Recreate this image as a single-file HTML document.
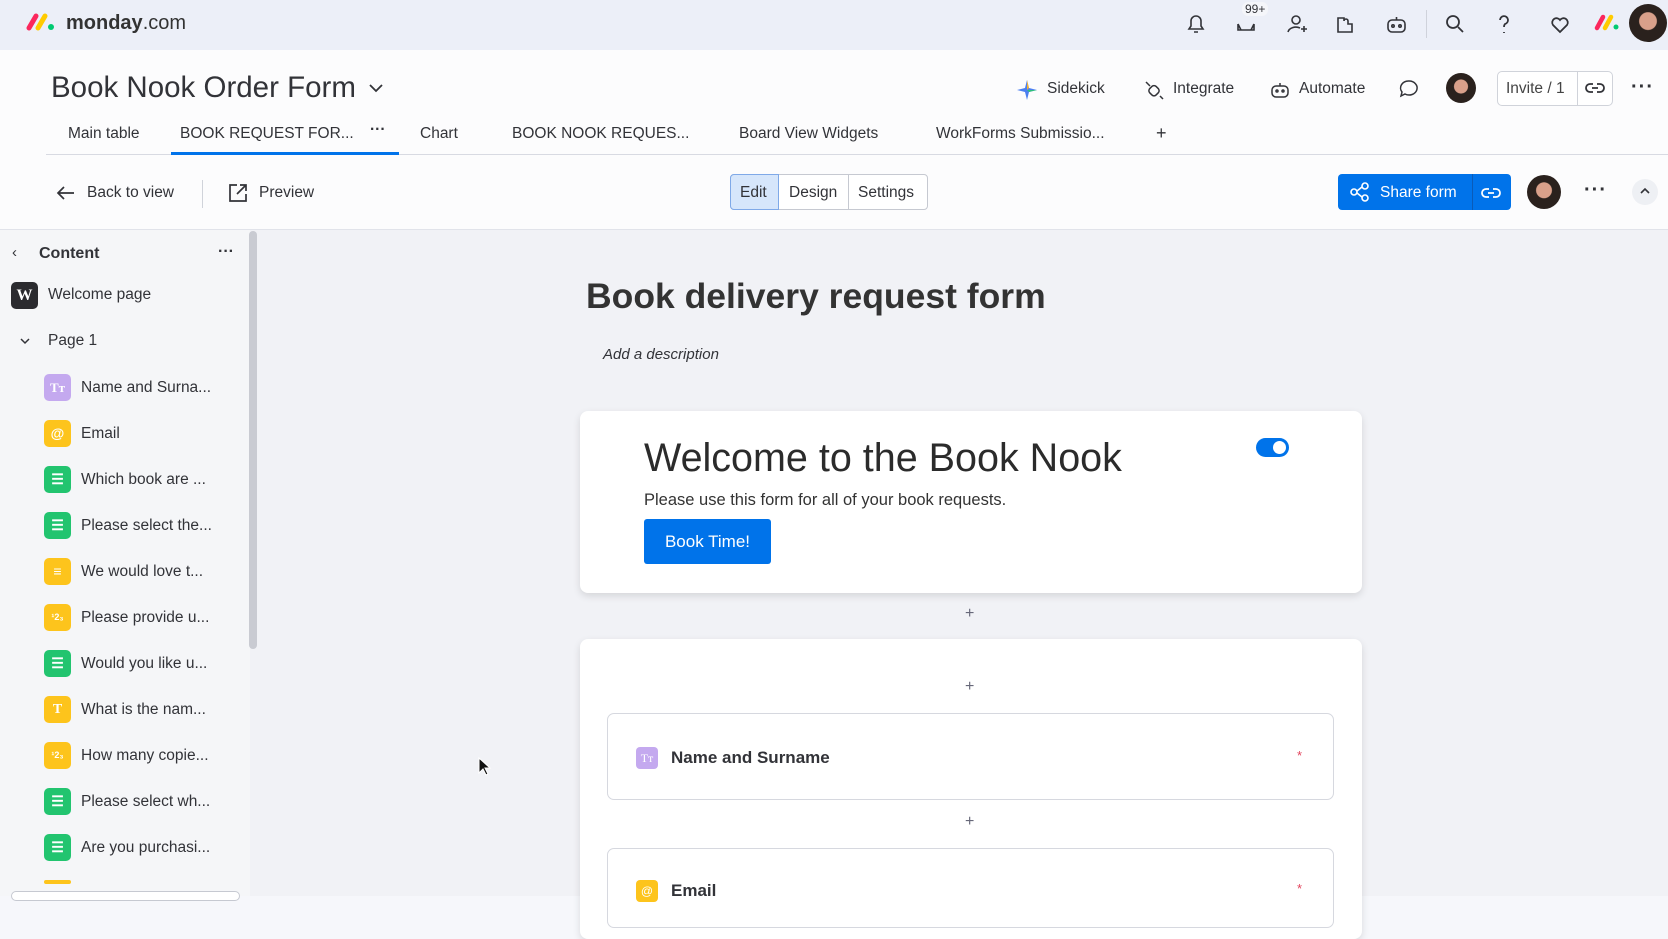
<!DOCTYPE html>
<html><head><meta charset="utf-8"><style>
*{box-sizing:border-box;margin:0;padding:0}
body{width:1668px;height:896px;overflow:hidden;background:#f6f7fb;font-family:"Liberation Sans",sans-serif;color:#323338;position:relative}
.a{position:absolute;white-space:nowrap}
.top{position:absolute;left:0;top:0;width:1668px;height:50px;background:#eceff8}
.hdr{position:absolute;left:0;top:50px;width:1668px;height:180px;background:#fcfcfd;border-bottom:1px solid #e1e3ea}
.main{position:absolute;left:0;top:230px;width:1668px;height:666px;background:#f1f2f6}
.ic{position:absolute;width:27px;height:27px;border-radius:5px;color:#fff;font-size:14px;font-weight:bold;text-align:center;line-height:27px}
.g{background:#22c46f}.y{background:#fdc41c}.p{background:#c4a9ef}
.si{font-size:15.5px;color:#323338}
.card{position:absolute;background:#fff;border-radius:8px;box-shadow:0 3px 8px rgba(0,0,0,.12)}
.fld{position:absolute;background:#fff;border:1px solid #d6d8df;border-radius:7px}
.plus{position:absolute;font-size:16px;color:#676879}
svg{position:absolute}
</style></head><body>
<div class="top"></div>
<svg style="left:26px;top:13px" width="30" height="18" viewBox="0 0 30 18"><line x1="3" y1="15" x2="10" y2="3" stroke="#fb275d" stroke-width="5" stroke-linecap="round"/><line x1="12" y1="15" x2="19" y2="3" stroke="#ffcb00" stroke-width="5" stroke-linecap="round"/><circle cx="25" cy="14" r="3" fill="#00ca72"/></svg>
<div class="a" style="left:66px;top:12px;font-size:20px;color:#333"><b>monday</b>.com</div>
<svg style="left:1185px;top:12px" width="230" height="24" fill="none" stroke="#323338" stroke-width="1.6">
<path d="M4 17h14l-2-3v-5a5 5 0 0 0-10 0v5zM9 20h4"/>
<path d="M53 12l3 6h10l3-6M53 12v6h16v-6"/>
<circle cx="111" cy="8" r="4"/><path d="M103 20a8 6 0 0 1 12-4M116 17h6M119 14v6"/>
<path d="M153 6h6v3a2 2 0 0 1 4 0v3h4v8h-14z"/>
<rect x="203" y="8" width="17" height="12" rx="4"/><path d="M211.5 8V5"/><circle cx="208" cy="14" r="1.2"/><circle cx="215" cy="14" r="1.2"/>
</svg>
<div class="a" style="left:1242px;top:2px;font-size:12px;background:#f5f6fa;border-radius:6px;padding:0 3px">99+</div>
<div class="a" style="left:1426px;top:10px;width:1px;height:28px;background:#cfd2db"></div>
<svg style="left:1443px;top:12px" width="130" height="24" fill="none" stroke="#323338" stroke-width="1.8"><circle cx="10" cy="10" r="6"/><path d="M15 15l5 5"/><path d="M57 8a4 4 0 1 1 5 4c-1 1-1 2-1 3M61 20v1"/><path d="M117 20l-7-7a4 4 0 0 1 7-5 4 4 0 0 1 7 5z"/></svg>
<svg style="left:1594px;top:13px" width="28" height="18"><line x1="3" y1="15" x2="9" y2="4" stroke="#fb275d" stroke-width="4.5" stroke-linecap="round"/><line x1="11" y1="15" x2="17" y2="4" stroke="#ffcb00" stroke-width="4.5" stroke-linecap="round"/><circle cx="22" cy="14" r="2.5" fill="#00ca72"/></svg>
<div class="a" style="left:1629px;top:4px;width:38px;height:38px;border-radius:50%;background:radial-gradient(circle at 50% 45%,#d9a08a 30%,#2a211d 33%)"></div>

<div class="hdr"></div>
<div class="a" style="left:51px;top:71px;font-size:29.5px;color:#323338">Book Nook Order Form</div>
<svg style="left:368px;top:82px" width="16" height="12" fill="none" stroke="#323338" stroke-width="1.8"><path d="M2 3l6 6 6-6"/></svg>
<svg style="left:1016px;top:79px" width="22" height="22"><path d="M11 1L13 9 21 11 13 13 11 21 9 13 1 11 9 9z" fill="#4b7ff0"/><path d="M11 1L13 9 11 11z" fill="#f2b233"/><path d="M21 11L13 13 11 11z" fill="#2fc07a"/></svg>
<div class="a si" style="left:1047px;top:80px">Sidekick</div>
<svg style="left:1144px;top:80px" width="20" height="20" fill="none" stroke="#323338" stroke-width="1.5"><rect x="6" y="6" width="9" height="9" rx="3" transform="rotate(45 10 10)"/><path d="M2 2l4 4M16 16l3 3"/></svg>
<div class="a si" style="left:1173px;top:80px">Integrate</div>
<svg style="left:1269px;top:80px" width="22" height="20" fill="none" stroke="#323338" stroke-width="1.5"><rect x="3" y="6" width="16" height="11" rx="4"/><path d="M11 6V3"/><circle cx="8" cy="11" r="1"/><circle cx="14" cy="11" r="1"/></svg>
<div class="a si" style="left:1299px;top:80px">Automate</div>
<svg style="left:1398px;top:78px" width="22" height="22" fill="none" stroke="#323338" stroke-width="1.5"><path d="M11 3a8 7 0 1 1-4 13l-4 2 1-4a8 7 0 0 1 7-11z"/></svg>
<div class="a" style="left:1446px;top:73px;width:30px;height:30px;border-radius:50%;background:radial-gradient(circle at 50% 45%,#d9a08a 30%,#2a211d 33%)"></div>
<div class="a" style="left:1497px;top:71px;width:116px;height:35px;border:1px solid #d0d3da;border-radius:5px;background:#fff"></div>
<div class="a" style="left:1577px;top:71px;width:1px;height:35px;background:#d0d3da"></div>
<div class="a si" style="left:1506px;top:80px;color:#444">Invite / 1</div>
<svg style="left:1585px;top:80px" width="20" height="16" fill="none" stroke="#323338" stroke-width="1.8"><path d="M8 4H5a4 4 0 0 0 0 8h3M12 4h3a4 4 0 0 1 0 8h-3M7 8h6"/></svg>
<div class="a" style="left:1631px;top:76px;font-size:20px;font-weight:bold;letter-spacing:1px">···</div>

<div class="a si" style="left:68px;top:125px">Main table</div>
<div class="a si" style="left:180px;top:125px">BOOK REQUEST FOR...</div>
<div class="a si" style="left:370px;top:121px;font-weight:bold">···</div>
<div class="a si" style="left:420px;top:125px">Chart</div>
<div class="a si" style="left:512px;top:125px">BOOK NOOK REQUES...</div>
<div class="a si" style="left:739px;top:125px">Board View Widgets</div>
<div class="a si" style="left:936px;top:125px">WorkForms Submissio...</div>
<div class="a" style="left:1156px;top:123px;font-size:18px">+</div>
<div class="a" style="left:46px;top:154px;width:1622px;height:1px;background:#d8dae2"></div>
<div class="a" style="left:171px;top:152px;width:228px;height:3px;background:#0073ea"></div>

<svg style="left:55px;top:183px" width="22" height="20" fill="none" stroke="#323338" stroke-width="1.7"><path d="M19 10H3M9 4l-6 6 6 6"/></svg>
<div class="a si" style="left:87px;top:184px">Back to view</div>
<div class="a" style="left:202px;top:180px;width:1px;height:28px;background:#d0d3da"></div>
<svg style="left:227px;top:182px" width="22" height="22" fill="none" stroke="#323338" stroke-width="1.7"><path d="M10 3H3v16h16v-7M13 3h6v6M19 3l-9 9"/></svg>
<div class="a si" style="left:259px;top:184px">Preview</div>
<div class="a" style="left:730px;top:174px;width:198px;height:36px;border:1px solid #c6c9d1;border-radius:4px;background:#fff"></div>
<div class="a" style="left:730px;top:174px;width:49px;height:36px;border:1px solid #7fa9e8;border-radius:4px 0 0 4px;background:#d6e6fb"></div>
<div class="a" style="left:848px;top:175px;width:1px;height:34px;background:#c6c9d1"></div>
<div class="a si" style="left:740px;top:184px">Edit</div>
<div class="a si" style="left:789px;top:184px">Design</div>
<div class="a si" style="left:858px;top:184px">Settings</div>
<div class="a" style="left:1338px;top:174px;width:173px;height:36px;border-radius:4px;background:#0073ea"></div>
<div class="a" style="left:1472px;top:174px;width:1px;height:36px;background:#0a5bb8"></div>
<svg style="left:1349px;top:182px" width="22" height="20" fill="none" stroke="#fff" stroke-width="1.6"><circle cx="5" cy="10" r="3"/><circle cx="16" cy="4" r="3"/><circle cx="16" cy="16" r="3"/><path d="M8 9l5-4M8 11l5 4"/></svg>
<div class="a si" style="left:1380px;top:184px;color:#fff">Share form</div>
<svg style="left:1481px;top:185px" width="20" height="16" fill="none" stroke="#fff" stroke-width="1.8"><path d="M8 4H5a4 4 0 0 0 0 8h3M12 4h3a4 4 0 0 1 0 8h-3M7 8h6"/></svg>
<div class="a" style="left:1527px;top:175px;width:34px;height:34px;border-radius:50%;background:radial-gradient(circle at 50% 45%,#d9a08a 30%,#2a211d 33%)"></div>
<div class="a" style="left:1584px;top:179px;font-size:20px;font-weight:bold;letter-spacing:1px">···</div>
<div class="a" style="left:1632px;top:179px;width:26px;height:26px;border-radius:50%;background:#eef0f4"></div>
<svg style="left:1638px;top:186px" width="14" height="10" fill="none" stroke="#323338" stroke-width="1.6"><path d="M3 7l4-4 4 4"/></svg>

<div class="main"></div>
<div class="a" style="left:0;top:230px;width:250px;height:666px;background:#f5f6f8"></div>
<div class="a" style="left:249px;top:231px;width:8px;height:418px;border-radius:4px;background:#c9cbd2"></div>
<div class="a" style="left:12px;top:244px;font-size:15px">‹</div>
<div class="a" style="left:39px;top:245px;font-size:16px;font-weight:bold">Content</div>
<div class="a" style="left:218px;top:243px;font-size:16px;font-weight:bold">···</div>
<div class="ic" style="left:11px;top:282px;background:#2b2b2f;font-family:'Liberation Serif',serif;font-size:16px">W</div>
<div class="a si" style="left:48px;top:286px">Welcome page</div>
<svg style="left:18px;top:336px" width="14" height="10" fill="none" stroke="#323338" stroke-width="1.5"><path d="M3 3l4 4 4-4"/></svg>
<div class="a si" style="left:48px;top:332px">Page 1</div>
<div class="ic p" style="left:44px;top:374px;font-family:'Liberation Serif',serif;font-size:13px">Tт</div><div class="a si" style="left:81px;top:379px">Name and Surna...</div>
<div class="ic y" style="left:44px;top:420px">@</div><div class="a si" style="left:81px;top:425px">Email</div>
<div class="ic g" style="left:44px;top:466px">☰</div><div class="a si" style="left:81px;top:471px">Which book are ...</div>
<div class="ic g" style="left:44px;top:512px">☰</div><div class="a si" style="left:81px;top:517px">Please select the...</div>
<div class="ic y" style="left:44px;top:558px">≡</div><div class="a si" style="left:81px;top:563px">We would love t...</div>
<div class="ic y" style="left:44px;top:604px;font-size:9px">¹2₃</div><div class="a si" style="left:81px;top:609px">Please provide u...</div>
<div class="ic g" style="left:44px;top:650px">☰</div><div class="a si" style="left:81px;top:655px">Would you like u...</div>
<div class="ic y" style="left:44px;top:696px;font-family:'Liberation Serif',serif">T</div><div class="a si" style="left:81px;top:701px">What is the nam...</div>
<div class="ic y" style="left:44px;top:742px;font-size:9px">¹2₃</div><div class="a si" style="left:81px;top:747px">How many copie...</div>
<div class="ic g" style="left:44px;top:788px">☰</div><div class="a si" style="left:81px;top:793px">Please select wh...</div>
<div class="ic g" style="left:44px;top:834px">☰</div><div class="a si" style="left:81px;top:839px">Are you purchasi...</div>
<div class="a" style="left:44px;top:880px;width:27px;height:4px;background:#fdc41c;border-radius:2px"></div>
<div class="a" style="left:11px;top:891px;width:229px;height:10px;border:1px solid #c6c9d1;border-radius:5px;background:#fff"></div>

<div class="a" style="left:586px;top:276px;font-size:35.5px;font-weight:bold;color:#333">Book delivery request form</div>
<div class="a" style="left:603px;top:346px;font-size:15px;font-style:italic;color:#323338">Add a description</div>

<div class="card" style="left:580px;top:411px;width:782px;height:182px"></div>
<div class="a" style="left:644px;top:436px;font-size:39.5px;color:#2b2b2b">Welcome to the Book Nook</div>
<div class="a" style="left:1256px;top:438px;width:33px;height:19px;border-radius:10px;background:#0073ea"></div>
<div class="a" style="left:1273px;top:441px;width:13px;height:13px;border-radius:50%;background:#fff"></div>
<div class="a" style="left:644px;top:491px;font-size:16.5px;color:#333">Please use this form for all of your book requests.</div>
<div class="a" style="left:644px;top:519px;width:127px;height:45px;border-radius:3px;background:#0073ea;color:#fff;font-size:17px;text-align:center;line-height:45px">Book Time!</div>
<div class="plus" style="left:965px;top:605px">+</div>

<div class="card" style="left:580px;top:639px;width:782px;height:300px"></div>
<div class="plus" style="left:965px;top:678px">+</div>
<div class="fld" style="left:607px;top:713px;width:727px;height:87px"></div>
<div class="a" style="left:636px;top:747px;width:22px;height:22px;border-radius:4px;background:#c4a9ef;color:#fff;font-family:'Liberation Serif',serif;font-size:12px;text-align:center;line-height:22px">Tт</div>
<div class="a" style="left:671px;top:748px;font-size:17px;font-weight:bold;color:#323338">Name and Surname</div>
<div class="a" style="left:1297px;top:748px;font-size:13px;color:#e2445c">*</div>
<div class="plus" style="left:965px;top:813px">+</div>
<div class="fld" style="left:607px;top:848px;width:727px;height:80px"></div>
<div class="a" style="left:636px;top:880px;width:22px;height:22px;border-radius:4px;background:#fdc41c;color:#fff;font-size:12px;text-align:center;line-height:22px">@</div>
<div class="a" style="left:671px;top:881px;font-size:17px;font-weight:bold;color:#323338">Email</div>
<div class="a" style="left:1297px;top:881px;font-size:13px;color:#e2445c">*</div>

<svg style="left:478px;top:757px" width="14" height="20"><path d="M1 1v15l4-4 3 6 2-1-3-6h5z" fill="#111" stroke="#fff" stroke-width="1"/></svg>
</body></html>
